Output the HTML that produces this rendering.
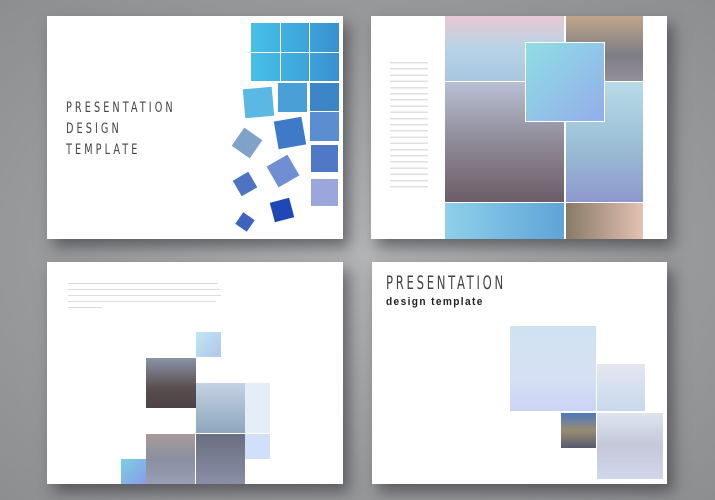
<!DOCTYPE html><html><head><style>
body{margin:0;width:715px;height:500px;overflow:hidden;background:radial-gradient(ellipse at 50% 50%,#b4b5b7 0%,#9a9b9d 60%,#8d8e90 100%);font-family:"Liberation Sans",sans-serif;position:relative}
.s{position:absolute;background:#fff;box-shadow:6px 8px 14px rgba(40,40,45,.55);overflow:hidden}
.a{position:absolute}
.t{position:absolute;font-weight:300;color:#444;letter-spacing:4px;font-size:14px;font-family:"DejaVu Sans Condensed","Liberation Sans",sans-serif;transform:scaleX(.77);transform-origin:left}
.l{position:absolute;height:1px;background:#dcdcdc}
</style></head><body>
<!-- slide 1 -->
<div class="s" style="left:47px;top:16px;width:296px;height:223px">
<div class="t" style="left:19px;top:82px;line-height:21px">PRESENTATION<br>DESIGN<br>TEMPLATE</div>
<div class="a" style="left:204px;top:7px;width:88px;height:58px;background:linear-gradient(90deg,#48c0e6,#3da6da 60%,#3a8fd0)"></div>
<div class="a" style="left:233px;top:7px;width:1px;height:58px;background:#fff"></div>
<div class="a" style="left:262px;top:7px;width:1px;height:58px;background:#fff"></div>
<div class="a" style="left:204px;top:36px;width:88px;height:1px;background:#fff"></div>
<div class="a" style="left:197px;top:72px;width:29px;height:29px;background:#5ab8e2;transform:rotate(-5deg)"></div>
<div class="a" style="left:231px;top:67px;width:29px;height:29px;background:#4a9fd6"></div>
<div class="a" style="left:263px;top:67px;width:29px;height:28px;background:#3c86c8"></div>
<div class="a" style="left:263px;top:96px;width:29px;height:29px;background:#5b8ed0"></div>
<div class="a" style="left:264px;top:129px;width:27px;height:27px;background:#4f79c6"></div>
<div class="a" style="left:264px;top:163px;width:27px;height:27px;background:#9aa6dc"></div>
<div class="a" style="left:229px;top:103px;width:28px;height:28px;background:#3e7ac8;transform:rotate(-10deg)"></div>
<div class="a" style="left:189px;top:116px;width:22px;height:22px;background:#7fa2c8;transform:rotate(35deg)"></div>
<div class="a" style="left:224px;top:143px;width:24px;height:24px;background:#6f8fd2;transform:rotate(-30deg)"></div>
<div class="a" style="left:189px;top:159px;width:18px;height:18px;background:#4d74c2;transform:rotate(-30deg)"></div>
<div class="a" style="left:225px;top:184px;width:20px;height:20px;background:#1f48b6;transform:rotate(-15deg)"></div>
<div class="a" style="left:191px;top:199px;width:14px;height:14px;background:#3d62c0;transform:rotate(35deg)"></div>
</div>
<!-- slide 2 -->
<div class="s" style="left:371px;top:16px;width:296px;height:223px">
<div class="a" style="left:19px;top:46px;width:38px;height:126px;background:repeating-linear-gradient(180deg,#e0e0e0 0 1.5px,transparent 1.5px 6.2px)"></div>
<div class="a" style="left:74px;top:0;width:119px;height:65px;background:linear-gradient(180deg,#e9c8d4,#b7d3e6 50%,#a8c6e0)"></div>
<div class="a" style="left:195px;top:0;width:77px;height:65px;background:linear-gradient(180deg,#c1a68a,#7d7d86 60%,#948e9a)"></div>
<div class="a" style="left:74px;top:66px;width:119px;height:120px;background:linear-gradient(180deg,#b9c0d4,#8f8a97 50%,#6c5d66)"></div>
<div class="a" style="left:195px;top:66px;width:77px;height:120px;background:linear-gradient(180deg,#b8dbe8,#9cc0d6 50%,#8d98cc)"></div>
<div class="a" style="left:74px;top:187px;width:119px;height:36px;background:linear-gradient(90deg,#8ed0ea,#5fa4d8)"></div>
<div class="a" style="left:195px;top:187px;width:77px;height:36px;background:linear-gradient(90deg,#887a68,#e4c1b3)"></div>
<div class="a" style="left:154px;top:26px;width:78px;height:78px;border:1px solid #fff;background:linear-gradient(135deg,#8fdde4,#93aeea)"></div>
</div>
<!-- slide 3 -->
<div class="s" style="left:47px;top:262px;width:296px;height:222px">
<div class="l" style="left:21px;top:21px;width:150px"></div>
<div class="l" style="left:21px;top:27px;width:152px"></div>
<div class="l" style="left:21px;top:33px;width:153px"></div>
<div class="l" style="left:21px;top:39px;width:148px"></div>
<div class="l" style="left:21px;top:45px;width:34px"></div>
<div class="a" style="left:149px;top:70px;width:25px;height:25px;background:linear-gradient(135deg,#bfe8f0,#b3c4ee)"></div>
<div class="a" style="left:99px;top:96px;width:50px;height:50px;background:linear-gradient(180deg,#8a93aa,#5a4e4e 60%,#4a4244)"></div>
<div class="a" style="left:149px;top:121px;width:49px;height:50px;background:linear-gradient(180deg,#c4d2e4,#8da6bc)"></div>
<div class="a" style="left:198px;top:121px;width:25px;height:50px;background:#e5edf8"></div>
<div class="a" style="left:198px;top:172px;width:25px;height:25px;background:#d0e0f8"></div>
<div class="a" style="left:99px;top:172px;width:49px;height:50px;background:linear-gradient(180deg,#a89a9a,#8a8ea0 50%,#9a9eb8)"></div>
<div class="a" style="left:149px;top:172px;width:49px;height:50px;background:linear-gradient(180deg,#6a6e80,#7a7e92 50%,#8a8ea8)"></div>
<div class="a" style="left:74px;top:197px;width:25px;height:25px;background:linear-gradient(135deg,#7ad0e2,#8a9ce8)"></div>
</div>
<!-- slide 4 -->
<div class="s" style="left:372px;top:262px;width:295px;height:222px">
<div class="t" style="left:14px;top:10px;font-size:19px;letter-spacing:4px;transform:scaleX(.68)">PRESENTATION</div>
<div class="a" style="left:14px;top:34px;font-size:11px;font-weight:bold;letter-spacing:1.5px;color:#222;transform:scaleX(.92);transform-origin:left">design template</div>
<div class="a" style="left:138px;top:64px;width:86px;height:85px;background:linear-gradient(180deg,#cfe2f2,#d6e0f4 60%,#cbd4f4)"></div>
<div class="a" style="left:225px;top:102px;width:48px;height:47px;background:linear-gradient(180deg,#e4e6f2,#c8d8ec)"></div>
<div class="a" style="left:189px;top:151px;width:35px;height:35px;background:linear-gradient(180deg,#4c78c0,#9a8c70 50%,#555a70)"></div>
<div class="a" style="left:225px;top:151px;width:66px;height:66px;background:linear-gradient(180deg,#dde4ee,#c4c8d8 50%,#d2d6ec)"></div>
</div>
</body></html>
